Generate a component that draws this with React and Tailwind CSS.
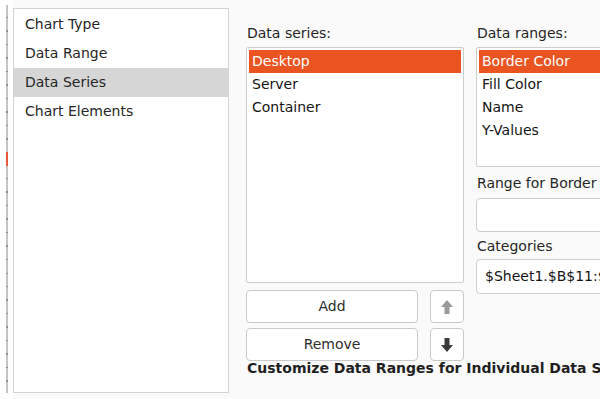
import React from 'react';

const font = { fontFamily: '"DejaVu Sans", "Liberation Sans", sans-serif' };

const ListBox = ({ items, selected, className }) => (
  <div className={`bg-white border border-[#cdcdcd] rounded-[2px] p-[2px] ${className}`}>
    {items.map((item, i) => (
      <div
        key={item}
        className={`h-[23px] flex items-center px-[3px] text-[14px] ${
          i === selected ? 'bg-[#e95420] text-white' : 'text-[#141414]'
        }`}
      >
        {item}
      </div>
    ))}
  </div>
);

const Button = ({ children, className }) => (
  <div
    className={`h-[33px] flex items-center justify-center bg-white border border-[#c9c9c9] rounded-[4px] text-[14px] text-[#2e2e2e] ${className}`}
  >
    {children}
  </div>
);

const ArrowUp = ({ color }) => (
  <svg width="14" height="16" viewBox="0 0 14 16">
    <path d="M7 1 L13 8 L9.5 8 L9.5 15 L4.5 15 L4.5 8 L1 8 Z" fill={color} />
  </svg>
);

const ArrowDown = ({ color }) => (
  <svg width="14" height="16" viewBox="0 0 14 16">
    <path d="M7 15 L13 8 L9.5 8 L9.5 1 L4.5 1 L4.5 8 L1 8 Z" fill={color} />
  </svg>
);

const navItems = ['Chart Type', 'Data Range', 'Data Series', 'Chart Elements'];

export default function App() {
  return (
    <div className="w-[600px] h-[399px] overflow-hidden bg-[#fafafa] flex" style={font}>
      {/* ruler strip */}
      <div className="w-[13px] h-full bg-white flex">
        <div className="ml-[6px] mt-[5px] h-[388px] w-[2px] bg-[#c4c4c4] flex flex-col">
          <div className="h-[147px] bg-[repeating-linear-gradient(to_bottom,transparent_0,transparent_12px,#8f8f8f_12px,#8f8f8f_13.5px)]" />
          <div className="h-[14px] bg-[#e35b3a]" />
          <div className="flex-1 bg-[repeating-linear-gradient(to_bottom,transparent_0,transparent_12px,#8f8f8f_12px,#8f8f8f_13.5px)]" />
        </div>
      </div>

      {/* left navigation */}
      <div className="mt-[8px] h-[385px] w-[216px] bg-white border border-[#d4d4d4] pt-[1px] flex flex-col">
        {navItems.map((item) => (
          <div
            key={item}
            className={`h-[29px] flex items-center pl-[11px] text-[14px] text-[#262626] ${
              item === 'Data Series' ? 'bg-[#d6d6d6]' : ''
            }`}
          >
            {item}
          </div>
        ))}
      </div>

      {/* right content */}
      <div className="flex-1 pl-[17px] pt-[23px] flex flex-col overflow-hidden">
        <div className="flex gap-[12px]">
          <div className="w-[218px] shrink-0 flex flex-col">
            <div className="h-[24px] pl-[1px] text-[14px] text-[#262626]">Data series:</div>
            <ListBox
              items={['Desktop', 'Server', 'Container']}
              selected={0}
              className="h-[236px]"
            />
            <div className="mt-[7px] flex gap-[12px]">
              <Button className="w-[173px]">Add</Button>
              <Button className="w-[34px]">
                <ArrowUp color="#9a9a9a" />
              </Button>
            </div>
            <div className="mt-[5px] flex gap-[12px]">
              <Button className="w-[173px]">Remove</Button>
              <Button className="w-[34px]">
                <ArrowDown color="#3a3a3a" />
              </Button>
            </div>
          </div>

          <div className="w-[200px] shrink-0 flex flex-col">
            <div className="h-[24px] pl-[1px] text-[14px] text-[#262626]">Data ranges:</div>
            <ListBox
              items={['Border Color', 'Fill Color', 'Name', 'Y-Values']}
              selected={0}
              className="h-[120px]"
            />
            <div className="mt-[6px] h-[25px] pl-[1px] text-[14px] text-[#262626] whitespace-nowrap">
              Range for Border Color
            </div>
            <div className="h-[34px] bg-white border border-[#cdcdcd] rounded-[4px]" />
            <div className="mt-[2px] h-[25px] pl-[1px] flex items-center text-[14px] text-[#262626]">
              Categories
            </div>
            <div className="h-[35px] bg-white border border-[#cdcdcd] rounded-[4px] flex items-center pl-[8px] text-[14px] text-[#141414] whitespace-nowrap">
              $Sheet1.$B$11:$B$14
            </div>
          </div>
        </div>
        <div className="-mt-[3px] pl-[1px] text-[14px] font-bold text-[#1f1f1f] whitespace-nowrap">
          Customize Data Ranges for Individual Data Series
        </div>
      </div>
    </div>
  );
}
